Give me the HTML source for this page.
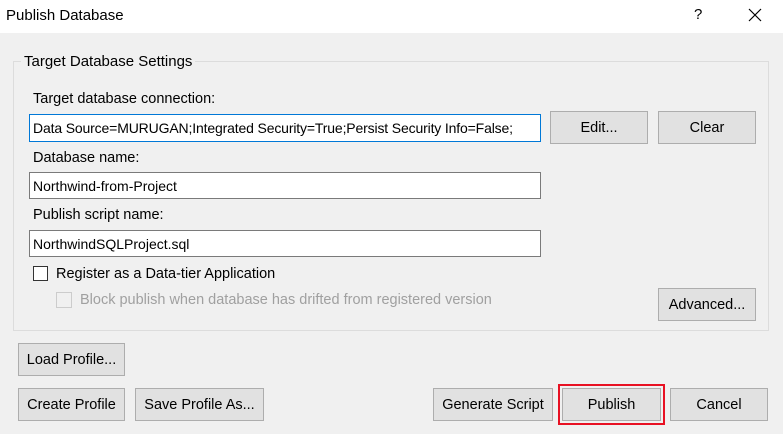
<!DOCTYPE html>
<html><head><style>
*{box-sizing:border-box;margin:0;padding:0}
body{width:783px;height:434px;background:#f0f0f0;font-family:"Liberation Sans",sans-serif;font-size:14.5px;color:#000;position:relative;overflow:hidden}
.a{position:absolute;white-space:nowrap}
.title{left:0;top:0;width:783px;height:33px;background:#fff}
.btn{position:absolute;background:#e1e1e1;border:1px solid #adadad;display:flex;align-items:center;justify-content:center;font-size:14.5px}
.inp{position:absolute;background:#fff;border:1px solid #7a7a7a;padding-left:3px;display:flex;align-items:center;font-size:14px;overflow:hidden;white-space:nowrap}
.grp{position:absolute;left:13px;top:61px;width:756px;height:270px;border:1px solid #dcdcdc}
</style></head><body>
<div class="a title"></div>
<div class="a" style="left:6px;top:7px;font-size:15px">Publish Database</div>
<div class="a" style="left:694px;top:6px;font-size:15px">?</div>
<svg class="a" style="left:748px;top:8px" width="14" height="14"><path d="M1 1L13 13M13 1L1 13" stroke="#000" stroke-width="1.2"/></svg>
<div class="grp"></div>
<div class="a" style="left:21px;top:53px;background:#f0f0f0;padding:0 3px;font-size:15px">Target Database Settings</div>
<div class="a" style="left:33px;top:91px">Target database connection:</div>
<div class="inp" style="left:29px;top:114px;width:512px;height:28px;border-color:#0078d7;letter-spacing:-0.15px">Data Source=MURUGAN;Integrated Security=True;Persist Security Info=False;</div>
<div class="btn" style="left:550px;top:111px;width:98px;height:33px">Edit...</div>
<div class="btn" style="left:658px;top:111px;width:98px;height:33px">Clear</div>
<div class="a" style="left:33px;top:150px">Database name:</div>
<div class="inp" style="left:29px;top:172px;width:512px;height:27px">Northwind-from-Project</div>
<div class="a" style="left:33px;top:207px">Publish script name:</div>
<div class="inp" style="left:29px;top:230px;width:512px;height:27px">NorthwindSQLProject.sql</div>
<div class="a" style="left:33px;top:266px;width:15px;height:15px;border:1px solid #333;background:#fff"></div>
<div class="a" style="left:56px;top:266px">Register as a Data-tier Application</div>
<div class="a" style="left:56px;top:292px;width:16px;height:16px;border:1px solid #ccc;background:#f0f0f0"></div>
<div class="a" style="left:80px;top:292px;color:#a0a0a0">Block publish when database has drifted from registered version</div>
<div class="btn" style="left:658px;top:288px;width:98px;height:33px">Advanced...</div>
<div class="btn" style="left:18px;top:343px;width:107px;height:33px">Load Profile...</div>
<div class="btn" style="left:18px;top:388px;width:107px;height:33px">Create Profile</div>
<div class="btn" style="left:135px;top:388px;width:129px;height:33px">Save Profile As...</div>
<div class="btn" style="left:433px;top:388px;width:120px;height:33px">Generate Script</div>
<div class="a" style="left:558px;top:384px;width:107px;height:41px;border:2px solid #e81123"></div>
<div class="btn" style="left:562px;top:388px;width:99px;height:33px">Publish</div>
<div class="btn" style="left:670px;top:388px;width:98px;height:33px">Cancel</div>
</body></html>
